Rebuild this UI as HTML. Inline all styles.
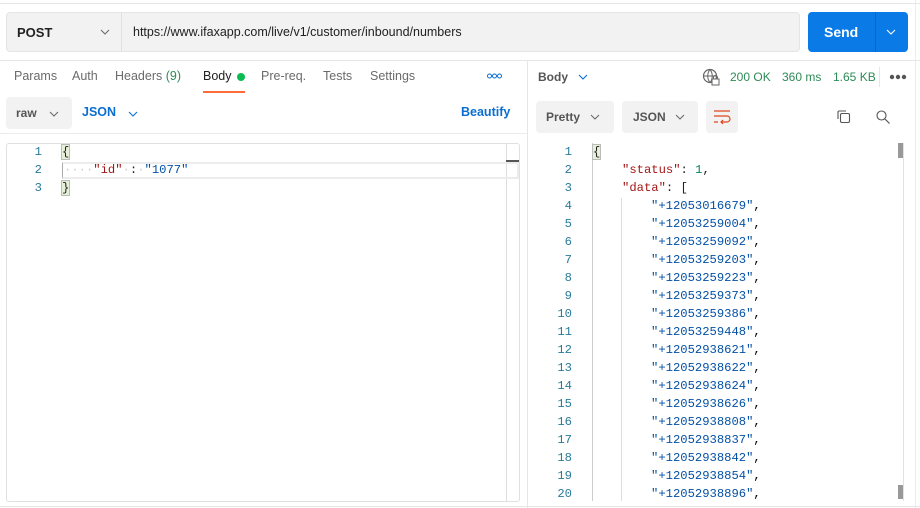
<!DOCTYPE html>
<html><head><meta charset="utf-8"><style>
*{box-sizing:border-box;margin:0;padding:0}
body{width:920px;height:508px;background:#fff;position:relative;overflow:hidden;font-family:"Liberation Sans",sans-serif;font-size:13px;color:#212121}
.a{position:absolute}
.mono{font-family:"Liberation Mono",monospace;font-size:12.2px}
.tab{position:absolute;top:69px;color:#6b6b6b;font-size:12.5px}
.num{position:absolute;width:30px;text-align:right;color:#2a7a9a}
.k{color:#a31515}.s{color:#0451a5}.n{color:#098658}
</style></head><body>
<div class="a" style="left:0;top:3px;width:920px;height:1px;background:#e6e6e6"></div>
<div class="a" style="left:6px;top:12px;width:794px;height:40px;background:#f2f2f2;border:1px solid #e4e4e4;border-radius:4px"></div>
<div class="a" style="left:121px;top:13px;width:1px;height:38px;background:#e0e0e0"></div>
<div class="a" style="left:17px;top:25px;font-weight:bold;font-size:13px;color:#212121">POST</div>
<svg class="a" style="left:100px;top:28px" width="10" height="8"><path d="M1 2 L5 6 L9 2" stroke="#6b6b6b" fill="none" stroke-width="1.1"/></svg>
<div class="a" style="left:133px;top:25px;font-size:12.5px;color:#212121">https://www.ifaxapp.com/live/v1/customer/inbound/numbers</div>
<div class="a" style="left:808px;top:12px;width:100px;height:40px;background:#0a7ae6;border-radius:4px"></div>
<div class="a" style="left:875px;top:12px;width:1px;height:40px;background:#0866c4"></div>
<div class="a" style="left:824px;top:24px;color:#fff;font-weight:bold;font-size:14px">Send</div>
<svg class="a" style="left:886px;top:28px" width="10" height="8"><path d="M1 2 L5 6 L9 2" stroke="#fff" fill="none" stroke-width="1.1"/></svg>
<div class="a" style="left:0;top:60px;width:920px;height:1px;background:#e6e6e6"></div>
<div class="a" style="left:527px;top:60px;width:1px;height:448px;background:#e6e6e6"></div>
<div class="a" style="left:915px;top:0;width:1px;height:508px;background:#ececec"></div>
<div class="a" style="left:0;top:506px;width:920px;height:1px;background:#e6e6e6"></div>

<div class="tab" style="left:14px">Params</div>
<div class="tab" style="left:72px">Auth</div>
<div class="tab" style="left:115px">Headers <span style="color:#2e8b57">(9)</span></div>
<div class="tab" style="left:203px;color:#212121">Body</div>
<div class="a" style="left:237px;top:73px;width:8px;height:8px;border-radius:50%;background:#0cbb52"></div>
<div class="a" style="left:203px;top:91px;width:42px;height:2px;background:#ff6c37"></div>
<div class="tab" style="left:261px">Pre-req.</div>
<div class="tab" style="left:323px">Tests</div>
<div class="tab" style="left:370px">Settings</div>
<svg class="a" style="left:487px;top:73px" width="16" height="6"><circle cx="2.5" cy="3" r="2" stroke="#0a6ed1" fill="none" stroke-width="1"/><circle cx="7.5" cy="3" r="2" stroke="#0a6ed1" fill="none" stroke-width="1"/><circle cx="12.5" cy="3" r="2" stroke="#0a6ed1" fill="none" stroke-width="1"/></svg>

<div class="a" style="left:6px;top:97px;width:66px;height:32px;background:#f2f2f2;border-radius:4px"></div>
<div class="a" style="left:16px;top:106px;font-size:12px;font-weight:bold;color:#555">raw</div>
<svg class="a" style="left:49px;top:110px" width="10" height="8"><path d="M1 2 L5 6 L9 2" stroke="#6b6b6b" fill="none" stroke-width="1.1"/></svg>
<div class="a" style="left:82px;top:105px;font-size:12.5px;font-weight:bold;color:#0a6ed1">JSON</div>
<svg class="a" style="left:128px;top:110px" width="10" height="8"><path d="M1 2 L5 6 L9 2" stroke="#0a6ed1" fill="none" stroke-width="1.1"/></svg>
<div class="a" style="left:461px;top:105px;font-size:12.5px;font-weight:bold;color:#0a6ed1">Beautify</div>
<div class="a" style="left:0;top:133px;width:527px;height:1px;background:#ececec"></div>

<div class="a" style="left:6px;top:143px;width:514px;height:359px;border:1px solid #e0e0e0;border-radius:3px"></div>
<div class="a" style="left:506px;top:144px;width:1px;height:357px;background:#ddd"></div>
<div class="a" style="left:506px;top:160px;width:13px;height:2px;background:#555"></div>
<div class="a" style="left:62px;top:162px;width:457px;height:17px;border:2px solid #ececec;border-left:1px solid #aaa"></div>
<div class="mono">
<div class="num" style="left:12px;top:145px">1</div>
<div class="num" style="left:12px;top:163px">2</div>
<div class="num" style="left:12px;top:181px">3</div>
<div class="a" style="left:62px;top:145px;background:#e6f0d8;outline:1px solid #bbb">{</div>
<div class="a" style="left:64px;top:163px;white-space:pre"><span style="color:#ccc">····</span><span class="k">"id"</span><span style="color:#ccc">·</span>:<span style="color:#ccc">·</span><span class="s">"1077"</span></div>
<div class="a" style="left:62px;top:181px;background:#e6f0d8;outline:1px solid #bbb">}</div>
</div>

<div class="a" style="left:538px;top:70px;font-size:12px;font-weight:bold;color:#555">Body</div>
<svg class="a" style="left:578px;top:73px" width="10" height="8"><path d="M1 2 L5 6 L9 2" stroke="#0a6ed1" fill="none" stroke-width="1.1"/></svg>
<svg class="a" style="left:702px;top:68px" width="18" height="18"><circle cx="8" cy="8" r="6.5" stroke="#666" fill="none" stroke-width="1.2"/><path d="M1.5 8H14.5M8 1.5C5 5 5 11 8 14.5M8 1.5C11 5 11 11 8 14.5" stroke="#666" fill="none" stroke-width="1"/><rect x="10" y="11" width="7" height="6" fill="#fff" stroke="#666"/><path d="M11.5 11V9.5a2 2 0 0 1 4 0V11" stroke="#666" fill="none"/></svg>
<div class="a" style="left:730px;top:70px;font-size:12px;color:#2e8b57">200 OK</div>
<div class="a" style="left:782px;top:70px;font-size:12px;color:#2e8b57">360 ms</div>
<div class="a" style="left:833px;top:70px;font-size:12px;color:#2e8b57">1.65 KB</div>
<div class="a" style="left:879px;top:67px;width:1px;height:20px;background:#e6e6e6"></div>
<svg class="a" style="left:889px;top:74px" width="18" height="6"><circle cx="3" cy="3" r="2.2" fill="#555"/><circle cx="9" cy="3" r="2.2" fill="#555"/><circle cx="15" cy="3" r="2.2" fill="#555"/></svg>

<div class="a" style="left:536px;top:101px;width:78px;height:32px;background:#f2f2f2;border-radius:4px"></div>
<div class="a" style="left:546px;top:110px;font-size:12px;color:#555;font-weight:bold">Pretty</div>
<svg class="a" style="left:590px;top:113px" width="10" height="8"><path d="M1 2 L5 6 L9 2" stroke="#6b6b6b" fill="none" stroke-width="1.1"/></svg>
<div class="a" style="left:622px;top:101px;width:76px;height:32px;background:#f2f2f2;border-radius:4px"></div>
<div class="a" style="left:633px;top:110px;font-size:12px;color:#555;font-weight:bold">JSON</div>
<svg class="a" style="left:675px;top:113px" width="10" height="8"><path d="M1 2 L5 6 L9 2" stroke="#6b6b6b" fill="none" stroke-width="1.1"/></svg>
<div class="a" style="left:706px;top:101px;width:32px;height:32px;background:#f2f2f2;border-radius:4px"></div>
<svg class="a" style="left:712px;top:108px" width="20" height="18"><path d="M2 3H18M2 8H15a3 3 0 0 1 0 6H9M11 12L9 14L11 16M2 14H6" stroke="#e0461c" fill="none" stroke-width="1.2"/></svg>
<svg class="a" style="left:836px;top:109px" width="16" height="16"><rect x="4.5" y="4.5" width="9" height="9" rx="1.5" stroke="#555" fill="none" stroke-width="1.1"/><path d="M2 10V3a1 1 0 0 1 1-1H10" stroke="#555" fill="none" stroke-width="1.1"/></svg>
<svg class="a" style="left:875px;top:109px" width="16" height="16"><circle cx="6.5" cy="6.5" r="4.5" stroke="#555" fill="none" stroke-width="1.1"/><path d="M10 10L14.5 14.5" stroke="#555" stroke-width="1.2"/></svg>

<div class="a" style="left:592px;top:143px;width:1px;height:358px;background:#ccc"></div>
<div class="a" style="left:621px;top:198px;width:1px;height:303px;background:#ddd"></div>
<div class="a" style="left:903px;top:143px;width:1px;height:358px;background:#e2e2e2"></div>
<div class="a" style="left:898px;top:143px;width:5px;height:15px;background:#999"></div>
<div class="a" style="left:898px;top:485px;width:5px;height:14px;background:#999"></div>
<div class="mono">
<div class="num" style="left:542px;top:145px">1</div>
<div class="a" style="left:593px;top:145px;background:#e6f0d8;outline:1px solid #bbb">{</div>
<div class="num" style="left:542px;top:163px">2</div>
<div class="a" style="left:622px;top:163px"><span class="k">"status"</span>: <span class="n">1</span>,</div>
<div class="num" style="left:542px;top:181px">3</div>
<div class="a" style="left:622px;top:181px"><span class="k">"data"</span>: [</div>
<div class="num" style="left:542px;top:199px">4</div><div class="a s" style="left:651px;top:199px">"+12053016679"<span style="color:#000">,</span></div>
<div class="num" style="left:542px;top:217px">5</div><div class="a s" style="left:651px;top:217px">"+12053259004"<span style="color:#000">,</span></div>
<div class="num" style="left:542px;top:235px">6</div><div class="a s" style="left:651px;top:235px">"+12053259092"<span style="color:#000">,</span></div>
<div class="num" style="left:542px;top:253px">7</div><div class="a s" style="left:651px;top:253px">"+12053259203"<span style="color:#000">,</span></div>
<div class="num" style="left:542px;top:271px">8</div><div class="a s" style="left:651px;top:271px">"+12053259223"<span style="color:#000">,</span></div>
<div class="num" style="left:542px;top:289px">9</div><div class="a s" style="left:651px;top:289px">"+12053259373"<span style="color:#000">,</span></div>
<div class="num" style="left:542px;top:307px">10</div><div class="a s" style="left:651px;top:307px">"+12053259386"<span style="color:#000">,</span></div>
<div class="num" style="left:542px;top:325px">11</div><div class="a s" style="left:651px;top:325px">"+12053259448"<span style="color:#000">,</span></div>
<div class="num" style="left:542px;top:343px">12</div><div class="a s" style="left:651px;top:343px">"+12052938621"<span style="color:#000">,</span></div>
<div class="num" style="left:542px;top:361px">13</div><div class="a s" style="left:651px;top:361px">"+12052938622"<span style="color:#000">,</span></div>
<div class="num" style="left:542px;top:379px">14</div><div class="a s" style="left:651px;top:379px">"+12052938624"<span style="color:#000">,</span></div>
<div class="num" style="left:542px;top:397px">15</div><div class="a s" style="left:651px;top:397px">"+12052938626"<span style="color:#000">,</span></div>
<div class="num" style="left:542px;top:415px">16</div><div class="a s" style="left:651px;top:415px">"+12052938808"<span style="color:#000">,</span></div>
<div class="num" style="left:542px;top:433px">17</div><div class="a s" style="left:651px;top:433px">"+12052938837"<span style="color:#000">,</span></div>
<div class="num" style="left:542px;top:451px">18</div><div class="a s" style="left:651px;top:451px">"+12052938842"<span style="color:#000">,</span></div>
<div class="num" style="left:542px;top:469px">19</div><div class="a s" style="left:651px;top:469px">"+12052938854"<span style="color:#000">,</span></div>
<div class="num" style="left:542px;top:487px">20</div><div class="a s" style="left:651px;top:487px">"+12052938896"<span style="color:#000">,</span></div>
</div>
</body></html>
